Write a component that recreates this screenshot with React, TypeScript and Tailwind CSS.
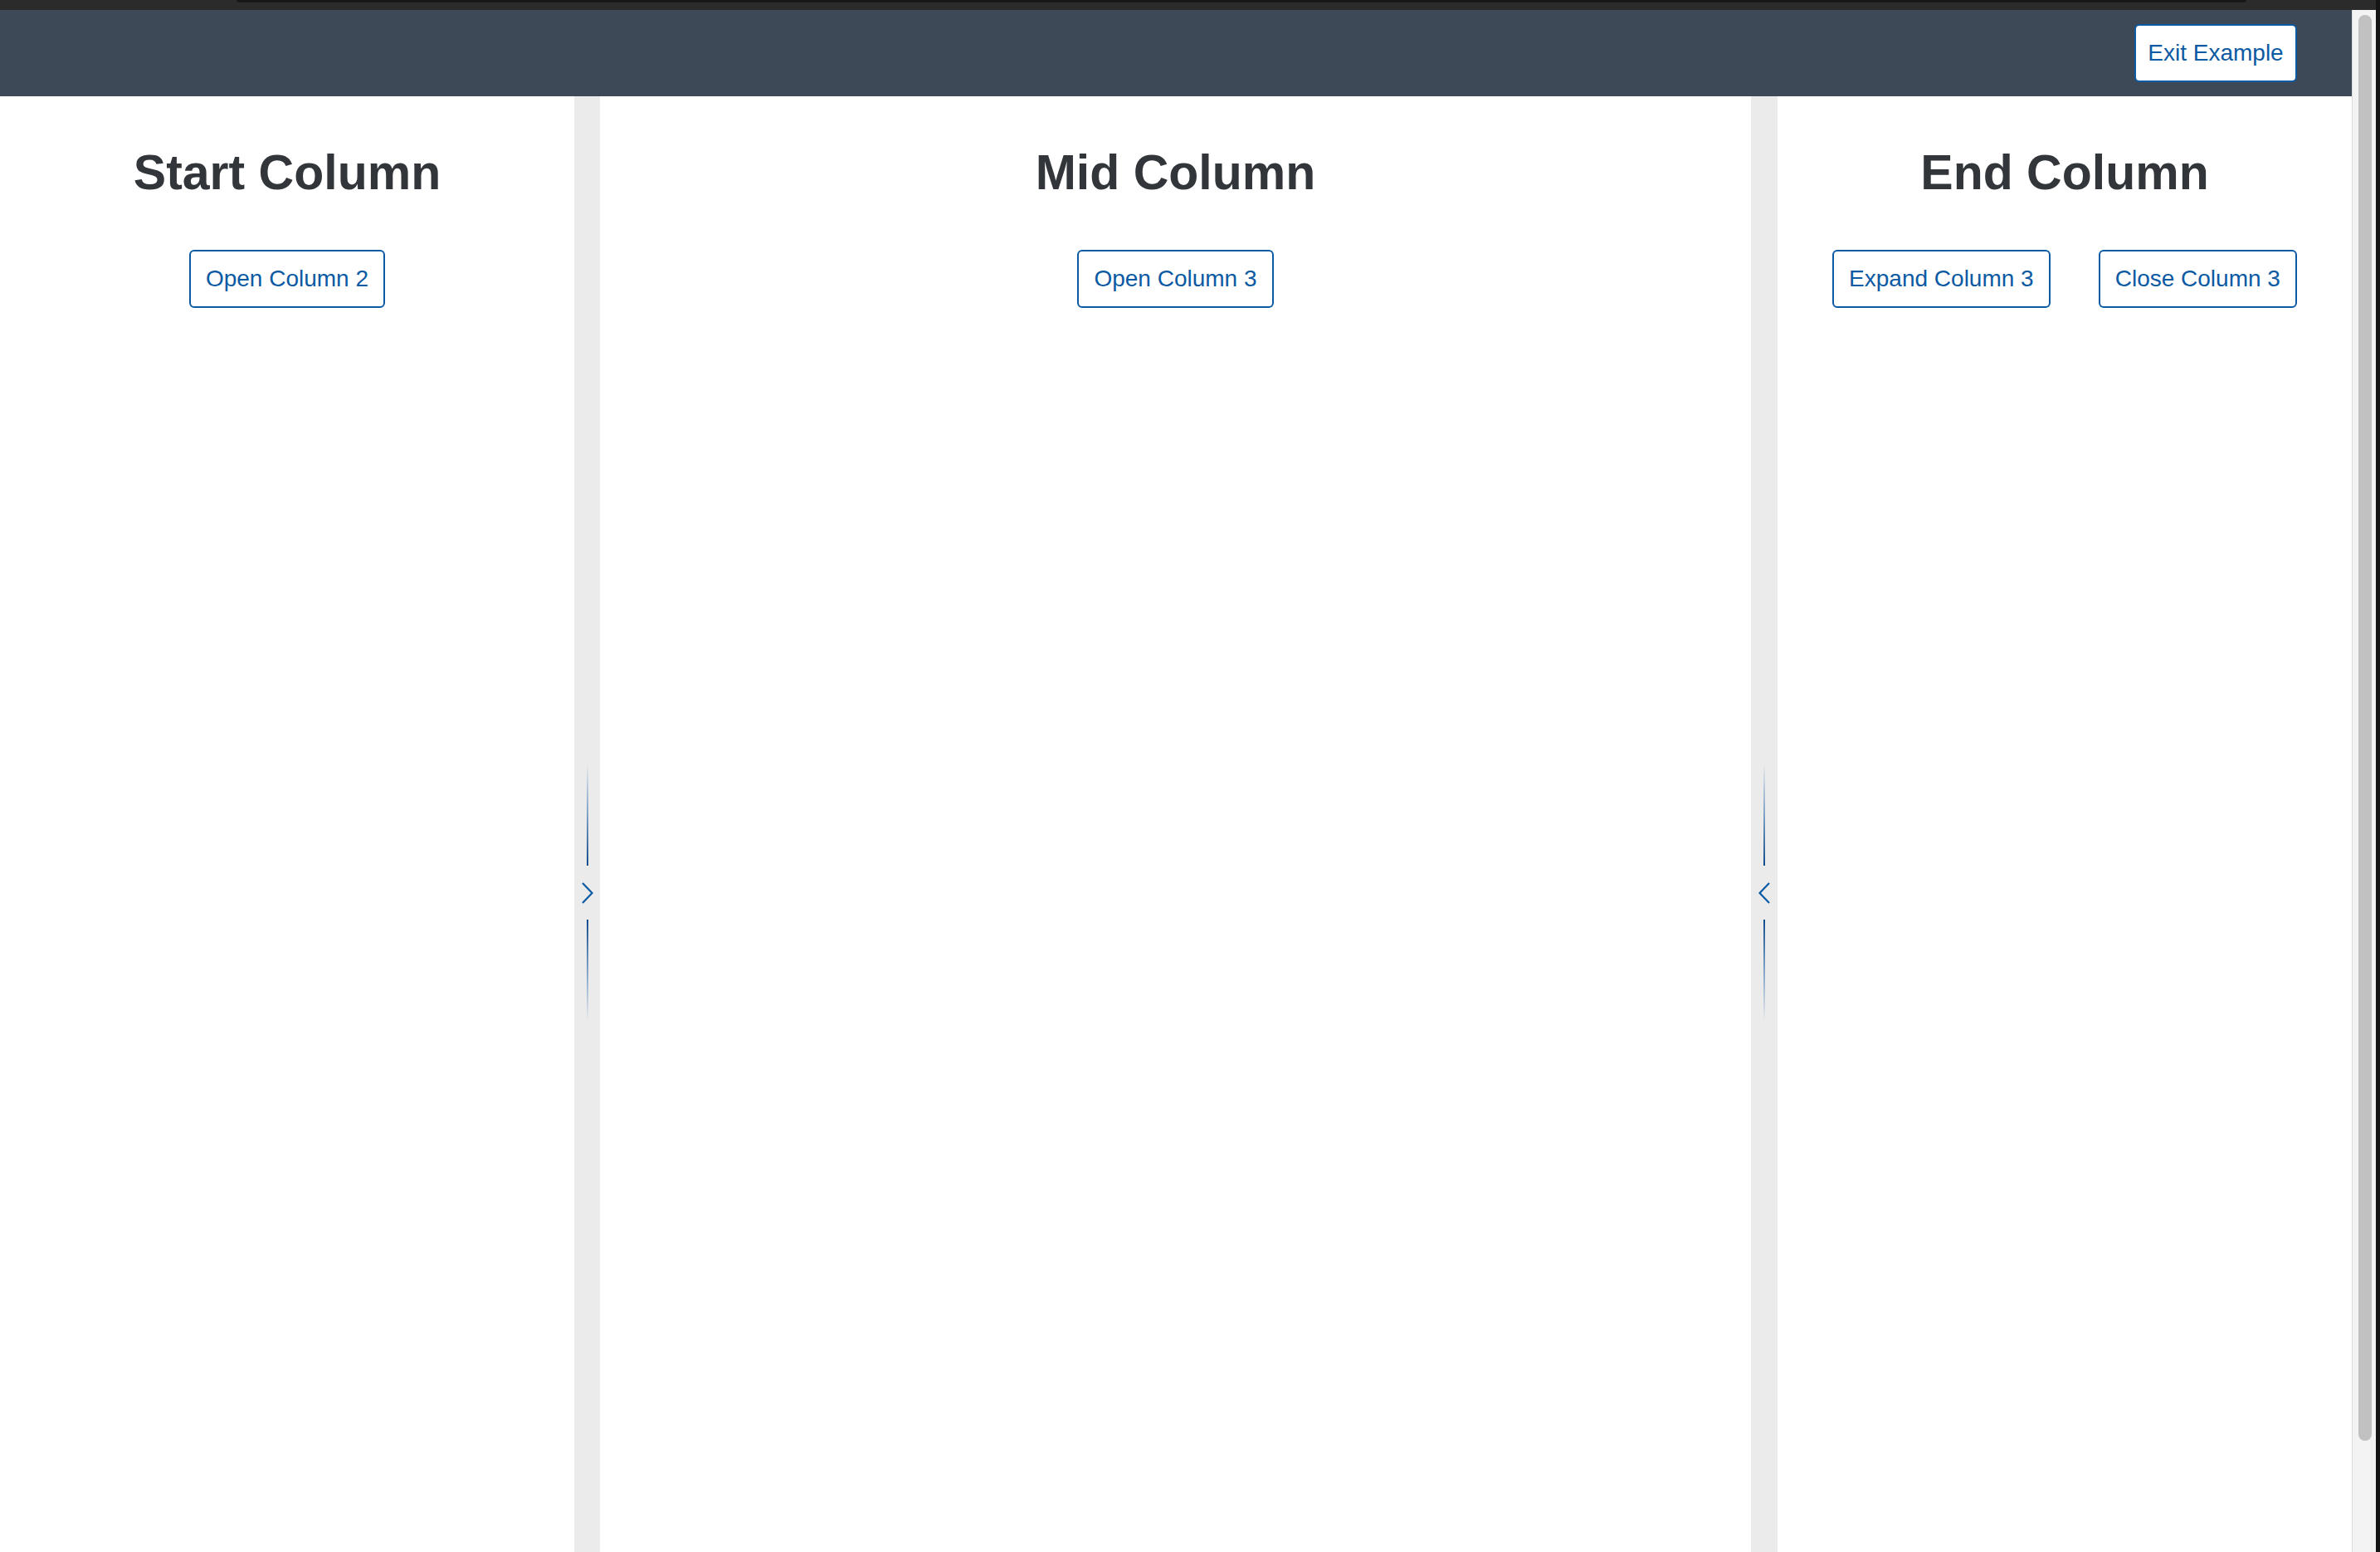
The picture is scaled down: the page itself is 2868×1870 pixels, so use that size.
const font = { fontFamily: '"Liberation Sans", Arial, sans-serif' };

function ColumnButton({ label }: { label: string }) {
  return (
    <button className="flex h-[70px] items-center rounded-[6px] border-2 border-[#0b5aa3] bg-white px-[18px] text-[28px] leading-none text-[#0b5aa3]">
      {label}
    </button>
  );
}

function Heading({ children }: { children: string }) {
  return (
    <h2 className="text-[59px] font-bold leading-[60px] text-[#32363a]">{children}</h2>
  );
}

function Separator({ direction }: { direction: 'left' | 'right' }) {
  return (
    <div className="flex w-full flex-col items-center bg-[#ebebeb] pt-[804px]">
      <div className="h-[123px] w-[2px] bg-gradient-to-b from-[#ebebeb] via-[#7fa3c8] to-[#0b4d8c]" />
      <div className="flex h-[65px] items-center justify-center">
        <svg width="14" height="26" viewBox="0 0 14 26" fill="none">
          {direction === 'right' ? (
            <path d="M1 1 L12.5 13 L1 25" stroke="#0b5aa3" strokeWidth="2.2" />
          ) : (
            <path d="M13 1 L1.5 13 L13 25" stroke="#0b5aa3" strokeWidth="2.2" />
          )}
        </svg>
      </div>
      <div className="h-[122px] w-[2px] bg-gradient-to-b from-[#0b4d8c] via-[#7fa3c8] to-[#ebebeb]" />
    </div>
  );
}

export default function App() {
  return (
    <div className="flex h-[1870px] w-[2868px] overflow-hidden bg-[#151515]" style={font}>
      <div className="flex w-[2863px] flex-col">
        {/* window strip */}
        <div className="h-[12px] bg-[#2b2b2b]">
          <div className="ml-[285px] h-[3px] w-[2422px] rounded-b-[4px] bg-[#181818]" />
        </div>

        <div className="flex flex-1">
          <main className="flex w-[2834px] flex-col">
            <header className="flex h-[104px] items-center justify-end bg-[#3d4957] pr-[66px]">
              <button className="flex h-[70px] w-[196px] items-center justify-center rounded-[6px] border-2 border-[#0b5aa3] bg-white text-[28px] leading-none text-[#0b5aa3]">
                Exit Example
              </button>
            </header>

            <div className="flex flex-1">
              <section className="flex w-[692px] flex-col items-center bg-white pt-[62px]">
                <Heading>Start Column</Heading>
                <div className="mt-[63px]">
                  <ColumnButton label="Open Column 2" />
                </div>
              </section>

              <div className="flex w-[31px]">
                <Separator direction="right" />
              </div>

              <section className="flex flex-1 flex-col items-center bg-white pt-[62px]">
                <Heading>Mid Column</Heading>
                <div className="mt-[63px]">
                  <ColumnButton label="Open Column 3" />
                </div>
              </section>

              <div className="flex w-[32px]">
                <Separator direction="left" />
              </div>

              <section className="flex w-[692px] flex-col items-center bg-white pt-[62px]">
                <Heading>End Column</Heading>
                <div className="mt-[63px] flex gap-[58px]">
                  <ColumnButton label="Expand Column 3" />
                  <ColumnButton label="Close Column 3" />
                </div>
              </section>
            </div>
          </main>

          {/* scrollbar */}
          <div className="w-[29px] border-l border-[#dcdcdc] bg-[#f3f3f3] pt-[6px]">
            <div className="ml-[7px] h-[1718px] w-[16px] rounded-full bg-[#c1c1c1]" />
          </div>
        </div>
      </div>
    </div>
  );
}
